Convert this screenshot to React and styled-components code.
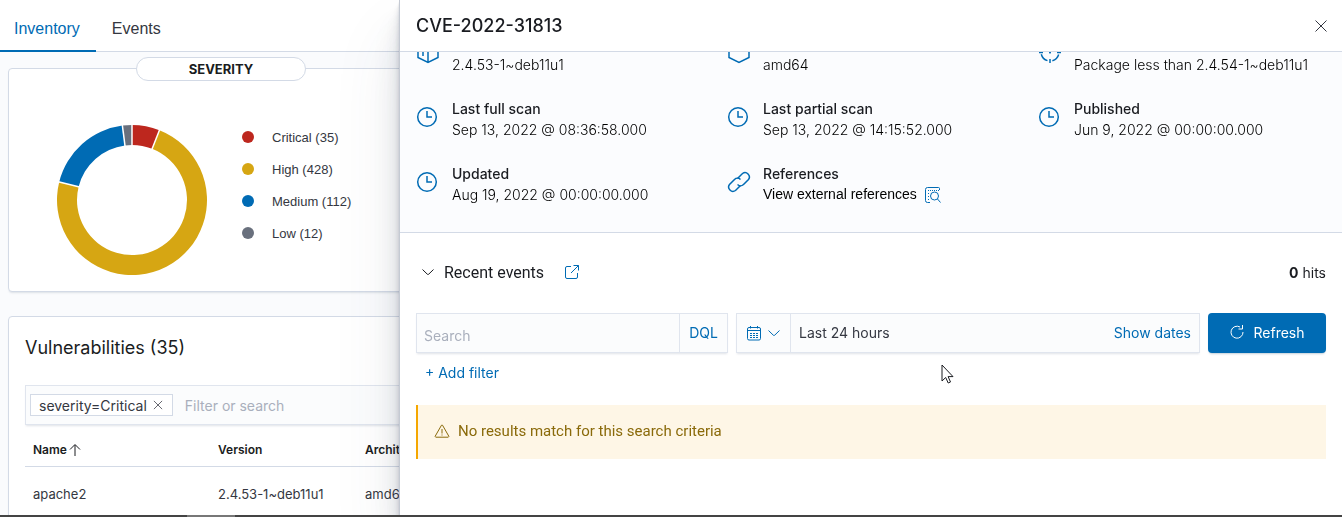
import { useState } from "react";
import styled, { createGlobalStyle } from "styled-components";

const severities = [
  { name: "Critical", count: 35, color: "#bd271e" },
  { name: "High", count: 428, color: "#d6a613" },
  { name: "Medium", count: 112, color: "#006bb4" },
  { name: "Low", count: 12, color: "#69707d" },
];

const details = [
  { icon: "package", value: "2.4.53-1~deb11u1" },
  { icon: "node", value: "amd64" },
  { icon: "crosshairs", value: "Package less than 2.4.54-1~deb11u1" },
  { icon: "clock", title: "Last full scan", value: "Sep 13, 2022 @ 08:36:58.000" },
  { icon: "clock", title: "Last partial scan", value: "Sep 13, 2022 @ 14:15:52.000" },
  { icon: "clock", title: "Published", value: "Jun 9, 2022 @ 00:00:00.000" },
  { icon: "clock", title: "Updated", value: "Aug 19, 2022 @ 00:00:00.000" },
  { icon: "link", title: "References", value: "View external references", inspect: true },
];

const icons = {
  package: <path d="M12 1.500 22 6.500v11L12 22.500 2 17.500v-11zM2 6.500l10 5 10-5M12 11.500v11M7 12v4" />,
  node: <path d="M12 1.500 22 7v10.500L12 22.500 2 17.500V7z" />,
  crosshairs: (
    <>
      <circle cx="12" cy="12" r="9" strokeDasharray="9.140 5" strokeDashoffset="-2.500" />
      <path d="M12 1v4M12 19v4M1 12.500h4M19 12.500h4M12 11v2.500M11 12h2" />
    </>
  ),
  clock: (
    <>
      <circle cx="11" cy="12" r="9.300" />
      <path d="M11 6v6h5" />
    </>
  ),
  link: (
    <>
      <path d="M10.500 8.500l5-5a4.300 4.300 0 0 1 6 6l-5 5a4.300 4.300 0 0 1-6 0" />
      <path d="M13.500 15.500l-5 5a4.300 4.300 0 0 1-6-6l5-5a4.300 4.300 0 0 1 6 0" />
    </>
  ),
};

const Icon = ({ size = 16, box = 16, width = 1, children }) => (
  <Svg
    width={size}
    height={size}
    viewBox={`0 0 ${box} ${box}`}
    strokeWidth={width}
    aria-hidden="true"
  >
    {children}
  </Svg>
);

const Cross = ({ size }) => (
  <Icon size={size}>
    <path d="M2.500 2.500l11 11M13.500 2.500l-11 11" />
  </Icon>
);

const ChevronDown = () => (
  <Icon>
    <path d="M2.500 5.500l4.800 4.700a1 1 0 0 0 1.400 0l4.800-4.700" />
  </Icon>
);

const point = (radius, angle) =>
  `${75 + radius * Math.sin(angle)} ${75 - radius * Math.cos(angle)}`;

const Donut = () => {
  const total = severities.reduce((sum, s) => sum + s.count, 0);
  let angle = 0;

  return (
    <svg width="150" height="150" viewBox="0 0 150 150" role="img" aria-label="Severity">
      {severities.map((s) => {
        const start = angle;
        angle += (s.count / total) * Math.PI * 2;
        const large = angle - start > Math.PI ? 1 : 0;
        return (
          <path
            key={s.name}
            fill={s.color}
            d={`M${point(75, start)} A75 75 0 ${large} 1 ${point(75, angle)} L${point(55, angle)} A55 55 0 ${large} 0 ${point(55, start)}Z M${point(75, start)}`}
          />
        );
      })}
      {severities.map((s) => {
        angle += (s.count / total) * Math.PI * 2;
        return (
          <path
            key={s.name}
            stroke="#fff"
            strokeWidth="1.5"
            d={`M${point(54, angle)} L${point(76, angle)}`}
          />
        );
      })}
    </svg>
  );
};

const Flyout = () => {
  const [query, setQuery] = useState("");

  return (
    <FlyoutPanel aria-label="CVE-2022-31813">
      <FlyoutHeader>
        <FlyoutTitle>CVE-2022-31813</FlyoutTitle>
        <IconButton aria-label="Close">
          <Cross size={16} />
        </IconButton>
      </FlyoutHeader>
      <Details>
        <DetailGrid>
          {details.map((item) => (
            <Detail key={item.title || item.value}>
              <DetailIcon>
                <Icon size={24} box={24} width={1.5}>
                  {icons[item.icon]}
                </Icon>
              </DetailIcon>
              <div>
                {item.title && <DetailTitle>{item.title}</DetailTitle>}
                {item.inspect ? (
                  <Reference href="#references">
                    {item.value}
                    <Icon>
                      <path d="M5 15.500H2.500a2 2 0 0 1-2-2v-11a2 2 0 0 1 2-2h11a1 1 0 0 1 1 1V3" />
                      <path d="M3 3.500h11M3 6.500h2M3 9.500h1M3 12.500h2" strokeDasharray="1 1" />
                      <circle cx="9.500" cy="9" r="4" />
                      <path d="M12.500 12l3 3.500" />
                    </Icon>
                  </Reference>
                ) : (
                  <DetailValue>{item.value}</DetailValue>
                )}
              </div>
            </Detail>
          ))}
        </DetailGrid>
      </Details>
      <Events>
        <EventsHeader>
          <Toggle aria-expanded="true">
            <ChevronDown />
            Recent events
          </Toggle>
          <PopoutLink href="#events" aria-label="Open in Events">
            <Icon>
              <path d="M7 2.500H3a1.500 1.500 0 0 0-1.500 1.500v9A1.500 1.500 0 0 0 3 14.500h9a1.500 1.500 0 0 0 1.500-1.500V9M9.500 1.500h5v5M14.500 1.500L7 9" />
            </Icon>
          </PopoutLink>
          <Hits>
            <strong>0</strong> hits
          </Hits>
        </EventsHeader>
        <QueryBar>
          <Field>
            <SearchInput
              aria-label="Search"
              placeholder="Search"
              value={query}
              onChange={(e) => setQuery(e.target.value)}
            />
            <DqlButton>DQL</DqlButton>
          </Field>
          <Field>
            <QuickSelect aria-label="Date quick select">
              <Icon>
                <path d="M3 2.500h10a1.500 1.500 0 0 1 1.500 1.500v9.500A1.500 1.500 0 0 1 13 15H3a1.500 1.500 0 0 1-1.500-1.500V4A1.500 1.500 0 0 1 3 2.500zM1.500 5.500h13M4.500 1v2.500M11.500 1v2.500" />
                <path d="M4 8.500h8M4 10.500h8M4 12.500h8" strokeDasharray="2 1" />
              </Icon>
              <ChevronDown />
            </QuickSelect>
            <DateRange>Last 24 hours</DateRange>
            <ShowDates>Show dates</ShowDates>
          </Field>
          <Refresh>
            <Icon>
              <path d="M11 3A6 6 0 1 0 14 8M13.500 1v4h-4" />
            </Icon>
            Refresh
          </Refresh>
        </QueryBar>
        <AddFilter>+ Add filter</AddFilter>
        <Callout>
          <Icon>
            <path d="M7.500 2.200L1.300 13a.8.8 0 0 0 .7 1.200h12a.8.8 0 0 0 .7-1.200L8.500 2.200a.6.6 0 0 0-1 0zM8 6v4.500M8 11.500v1" />
          </Icon>
          No results match for this search criteria
        </Callout>
      </Events>
    </FlyoutPanel>
  );
};

const App = () => {
  const [filter, setFilter] = useState("");

  return (
    <>
      <GlobalStyle />
      <Page>
        <Tabs>
          <Tab $active>Inventory</Tab>
          <Tab>Events</Tab>
        </Tabs>
        <Content>
          <Stats>
            <SeverityPanel>
              <Pill>SEVERITY</Pill>
              <Chart>
                <Donut />
                <Legend>
                  {severities.map((s) => (
                    <LegendItem key={s.name} $color={s.color}>
                      {s.name} ({s.count})
                    </LegendItem>
                  ))}
                </Legend>
              </Chart>
            </SeverityPanel>
          </Stats>
          <TablePanel>
            <PanelTitle>Vulnerabilities (35)</PanelTitle>
            <FilterBar>
              <Chip>
                severity=Critical
                <IconButton aria-label="Remove filter">
                  <Cross size={12} />
                </IconButton>
              </Chip>
              <FilterInput
                aria-label="Filter or search"
                placeholder="Filter or search"
                value={filter}
                onChange={(e) => setFilter(e.target.value)}
              />
            </FilterBar>
            <Table>
              <thead>
                <tr>
                  <Th $width="185px">
                    <SortButton>
                      Name
                      <Icon>
                        <path d="M8 14V3M3 7.500L8 2.500l5 5" />
                      </Icon>
                    </SortButton>
                  </Th>
                  <Th $width="147px">Version</Th>
                  <Th>Architecture</Th>
                </tr>
              </thead>
              <tbody>
                <tr>
                  <Td>apache2</Td>
                  <Td>2.4.53-1~deb11u1</Td>
                  <Td>amd64</Td>
                </tr>
              </tbody>
            </Table>
          </TablePanel>
        </Content>
      </Page>
      <Flyout />
      <Cursor width="13" height="20" viewBox="0 0 13 20" aria-hidden="true">
        <path
          d="M1 1v16l3.700-3.500 2.500 5.500 2.300-1-2.400-5.400H12z"
          fill="#fff"
          stroke="#1a1c21"
        />
      </Cursor>
      <BottomEdge />
    </>
  );
};

const GlobalStyle = createGlobalStyle`
  * {
    box-sizing: border-box;
  }

  body {
    margin: 0;
    background: #fafbfd;
    color: #343741;
    font-family: Inter, "Liberation Sans", sans-serif;
    font-size: 14px;
    line-height: 21px;
  }

  button,
  input {
    margin: 0;
    padding: 0;
    border: 0;
    background: none;
    color: inherit;
    font: inherit;
  }

  h1, h2, p, ul {
    margin: 0;
    padding: 0;
    font-weight: 400;
  }
`;

const Svg = styled.svg`
  flex: none;
  fill: none;
  stroke: currentColor;
`;

const Page = styled.main`
  height: 100vh;
  overflow: hidden;
`;

const Tabs = styled.nav`
  display: flex;
  height: 52px;
  margin-left: -2px;
  background: #fff;
  border-bottom: 1px solid #d3dae6;
`;

const Tab = styled.button`
  height: 52px;
  padding: 7px 16px 0;
  border-bottom: 2px solid ${(props) => (props.$active ? "#006bb4" : "transparent")};
  color: ${(props) => (props.$active ? "#006bb4" : "#343741")};
  font-family: "Liberation Sans", sans-serif;
  font-size: 16px;
`;

const Content = styled.div`
  padding: 16px 8px;
`;

const Stats = styled.div`
  display: grid;
  grid-template-columns: repeat(3, 1fr);
  gap: 24px;
  margin-bottom: 24px;
`;

const Panel = styled.section`
  background: #fff;
  border: 1px solid #d3dae6;
  border-radius: 4px;
  box-shadow: 0 2px 2px -1px rgba(152, 162, 179, 0.3);
`;

const SeverityPanel = styled(Panel)`
  display: flex;
  flex-direction: column;
  align-items: center;
  height: 224px;
`;

const Pill = styled.h2`
  width: 170px;
  margin-top: -12px;
  border: 1px solid #d3dae6;
  border-radius: 12px;
  background: #fff;
  color: #1a1c21;
  font-size: 13px;
  font-weight: 700;
  line-height: 22px;
  text-align: center;
`;

const Chart = styled.div`
  display: flex;
  align-self: stretch;
  gap: 35px;
  padding: 44px 48px 0;
`;

const Legend = styled.ul`
  list-style: none;
`;

const LegendItem = styled.li`
  display: flex;
  align-items: center;
  gap: 18px;
  height: 32px;
  font-family: "Liberation Sans", sans-serif;
  font-size: 13px;

  &:first-child {
    height: 24px;
    margin-bottom: 4px;
  }

  &::before {
    content: "";
    width: 12px;
    height: 12px;
    border-radius: 50%;
    background: ${(props) => props.$color};
  }
`;

const TablePanel = styled(Panel)`
  padding: 16px;
`;

const PanelTitle = styled.h2`
  margin-bottom: 22px;
  color: #1a1c21;
  font-size: 18px;
  line-height: 30px;
`;

const FilterBar = styled.div`
  display: flex;
  align-items: center;
  gap: 12px;
  height: 40px;
  padding: 0 4px;
  background: #fbfcfd;
  border: 1px solid #e0e5ee;
  box-shadow: 0 2px 2px -1px rgba(152, 162, 179, 0.3);
`;

const IconButton = styled.button`
  display: flex;
  color: #343741;
`;

const Chip = styled.span`
  display: flex;
  align-items: center;
  gap: 5px;
  height: 22px;
  padding: 0 8px;
  background: #fff;
  border: 1px solid #d3dae6;
`;

const FilterInput = styled.input`
  flex: 1;
  outline: 0;

  &::placeholder {
    color: #a9afbc;
  }
`;

const Table = styled.table`
  width: 100%;
  border-collapse: collapse;
  table-layout: fixed;
`;

const Th = styled.th`
  width: ${(props) => props.$width || "auto"};
  height: 41px;
  padding: 9px 8px 0;
  border-bottom: 1px solid #d3dae6;
  color: #1a1c21;
  font-size: 12px;
  font-weight: 600;
  text-align: left;
`;

const SortButton = styled.button`
  display: flex;
  align-items: center;
  gap: 0;
`;

const Td = styled.td`
  height: 57px;
  padding: 0 8px;
  font-size: 13px;
`;

const FlyoutPanel = styled.aside`
  position: fixed;
  inset: 0 0 0 399px;
  display: flex;
  flex-direction: column;
  background: #fff;
  border-left: 1px solid #c5cad3;
  box-shadow:
    0 40px 64px 0 rgba(65, 78, 101, 0.1),
    0 24px 32px 0 rgba(65, 78, 101, 0.1),
    0 16px 16px 0 rgba(65, 78, 101, 0.1),
    0 8px 8px 0 rgba(65, 78, 101, 0.1),
    0 4px 4px 0 rgba(65, 78, 101, 0.1),
    0 2px 2px 0 rgba(65, 78, 101, 0.1);
`;

const FlyoutHeader = styled.header`
  display: flex;
  justify-content: space-between;
  align-items: center;
  height: 52px;
  padding: 0 13px 0 16px;
  border-bottom: 1px solid #d3dae6;
`;

const FlyoutTitle = styled.h1`
  color: #1a1c21;
  font-size: 18px;
  font-weight: 500;
`;

const Details = styled.section`
  overflow: hidden;
  padding: 0 16px 27px;
  background: #fbfcfe;
  border-bottom: 1px solid #d3dae6;
`;

/* the list is scrolled a little way under the header */
const DetailGrid = styled.div`
  display: grid;
  grid-template-columns: repeat(3, 1fr);
  gap: 23px;
  margin-top: -19px;
`;

const Detail = styled.div`
  display: flex;
  align-items: flex-end;
  gap: 12px;
  height: 42px;
  color: #1a1c21;
`;

const DetailIcon = styled.span`
  display: flex;
  margin-bottom: 11px;
  color: #006bb4;
`;

const DetailTitle = styled.h2`
  font-size: 14px;
  font-weight: 500;
`;

const DetailValue = styled.p`
  color: #000;
  font-weight: 300;
`;

const Reference = styled.a`
  display: flex;
  align-items: center;
  gap: 8px;
  color: #000;
  font-family: "Liberation Sans", sans-serif;
  text-decoration: none;

  svg {
    color: #006bb4;
  }
`;

const Events = styled.section`
  padding: 27px 16px;
`;

const EventsHeader = styled.div`
  display: flex;
  align-items: center;
  height: 24px;
  margin-bottom: 29px;
`;

const Toggle = styled.button`
  display: flex;
  align-items: center;
  gap: 8px;
  padding-left: 4px;
  color: #1a1c21;
  font-family: Roboto, sans-serif;
  font-size: 16px;
`;

const PopoutLink = styled.a`
  display: flex;
  margin-left: 20px;
  color: #006bb4;
`;

const Hits = styled.p`
  margin-left: auto;
  color: #1a1c21;

  strong {
    font-weight: 700;
  }
`;

const QueryBar = styled.div`
  display: grid;
  grid-template-columns: 1fr minmax(0, 464px) auto;
  gap: 8px;
  margin-bottom: 9px;
`;

const Field = styled.div`
  display: flex;
  height: 40px;
  background: #fbfcfd;
  border: 1px solid #e0e5ee;
  box-shadow: 0 2px 2px -1px rgba(152, 162, 179, 0.3);
`;

const SearchInput = styled.input`
  flex: 1;
  min-width: 0;
  padding: 4px 7px 0;
  outline: 0;

  &::placeholder {
    color: #a9afbc;
  }
`;

const LinkButton = styled.button`
  color: #006bb4;
  white-space: nowrap;
`;

const DqlButton = styled(LinkButton)`
  width: 48px;
  padding-bottom: 2px;
  border-left: 1px solid #e0e5ee;
`;

const QuickSelect = styled(LinkButton)`
  display: flex;
  align-items: center;
  gap: 4px;
  padding: 0 8px 0 9px;
  border-right: 1px solid #e0e5ee;
`;

const DateRange = styled.button`
  flex: 1;
  padding: 0 8px 2px;
  text-align: left;
`;

const ShowDates = styled(LinkButton)`
  padding: 0 8px 2px;
`;

const Refresh = styled.button`
  display: flex;
  justify-content: center;
  align-items: center;
  gap: 8px;
  width: 118px;
  height: 40px;
  padding-bottom: 2px;
  background: #006bb4;
  border-radius: 4px;
  box-shadow: 0 2px 2px -1px rgba(54, 97, 126, 0.3);
  color: #fff;
`;

const AddFilter = styled(LinkButton)`
  display: block;
  margin: 0 0 22px 9px;
`;

const Callout = styled.div`
  display: flex;
  align-items: center;
  gap: 8px;
  height: 54px;
  padding: 0 16px 2px;
  background: #fef6e6;
  border-left: 2px solid #f5a700;
  color: #8a6a0a;
  font-family: Roboto, sans-serif;
  font-size: 15px;
`;

const Cursor = styled.svg`
  position: fixed;
  left: 941px;
  top: 364px;
`;

const BottomEdge = styled.div`
  position: fixed;
  inset: auto 0 0;
  height: 2px;
  background: linear-gradient(#777, #777) 187px 0 / 48px 2px no-repeat #444;
`;

export default App;
